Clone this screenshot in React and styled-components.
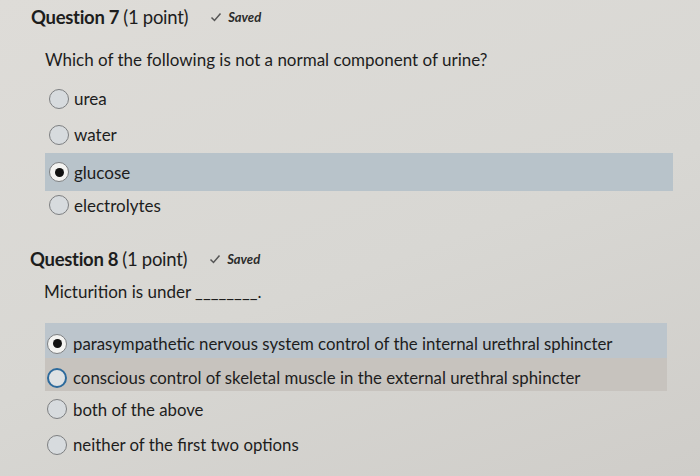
import React from 'react';
import styled, { createGlobalStyle } from 'styled-components';

const Global = createGlobalStyle`
  html, body { margin: 0; padding: 0; }
  body {
    width: 700px;
    height: 476px;
    overflow: hidden;
    background: linear-gradient(160deg, #dedcd8 0%, #d8d7d3 55%, #cfcdc9 100%);
    font-family: Lato, "Open Sans", sans-serif;
    color: #1d1d1d;
  }
`;

const Page = styled.div`
  padding-top: 5px;
`;

const Block = styled.section`
  padding-left: ${p => p.$indent}px;
  margin-bottom: ${p => p.$gap}px;
`;

const Head = styled.div`
  display: flex;
  align-items: center;
  height: 24px;
`;

const Title = styled.h2`
  margin: 0;
  font-size: 18.5px;
  font-weight: 700;
  letter-spacing: -0.3px;
  span { font-weight: 400; }
`;

const Saved = styled.div`
  display: flex;
  align-items: center;
  gap: 6px;
  margin-left: ${p => p.$left}px;
  font-size: 13px;
  font-style: italic;
  font-weight: 700;
  color: #2a2a2a;
  svg { width: 12px; height: 12px; }
`;

const Prompt = styled.p`
  margin: ${p => p.$top}px 0 0 ${p => p.$indent}px;
  font-size: 17px;
  line-height: 22px;
`;

const Options = styled.div`
  margin: ${p => p.$top}px ${p => p.$right}px 0 ${p => p.$left}px;
  display: flex;
  flex-direction: column;
`;

const Row = styled.label`
  box-sizing: border-box;
  display: flex;
  align-items: center;
  gap: ${p => p.$gap}px;
  height: ${p => p.$h}px;
  padding: ${p => p.$pt || 0}px 0 0 ${p => p.$pad}px;
  background: ${p => p.$bg || 'transparent'};
  font-size: ${p => p.$size || 17}px;
`;

const Radio = styled.span`
  box-sizing: border-box;
  width: 20px;
  height: 20px;
  border-radius: 50%;
  flex-shrink: 0;
  border: ${p => (p.$focus ? '2px solid #2d6a9c' : '1.5px solid #7d7f81')};
  background: ${p => (p.$checked ? '#f3f3f1' : p.$focus ? '#dfe2e4' : '#d7dbde')};
  display: flex;
  align-items: center;
  justify-content: center;
  &::after {
    content: '';
    display: ${p => (p.$checked ? 'block' : 'none')};
    width: 9px;
    height: 9px;
    border-radius: 50%;
    background: #111;
  }
`;

const Check = () => (
  <svg viewBox="0 0 12 12" fill="none" stroke="#555" strokeWidth="1.5">
    <path d="M1.5 6.5 L4.5 9.5 L10.5 2.5" />
  </svg>
);

export default function App() {
  return (
    <Page>
      <Global />
      <Block $indent={31} $gap={28}>
        <Head>
          <Title>Question 7 <span>(1 point)</span></Title>
          <Saved $left={22}><Check />Saved</Saved>
        </Head>
        <Prompt $top={20} $indent={14}>Which of the following is not a normal component of urine?</Prompt>
        <Options $top={10} $left={14} $right={27}>
          <Row $h={35} $pad={4} $gap={5}><Radio />urea</Row>
          <Row $h={37} $pad={4} $gap={5}><Radio />water</Row>
          <Row $h={38} $pad={4} $gap={5} $bg="#b8c3ca"><Radio $checked />glucose</Row>
          <Row $h={28} $pad={4} $gap={5}><Radio />electrolytes</Row>
        </Options>
      </Block>
      <Block $indent={30} $gap={0}>
        <Head>
          <Title>Question 8 <span>(1 point)</span></Title>
          <Saved $left={22}><Check />Saved</Saved>
        </Head>
        <Prompt $top={10} $indent={14}>Micturition is under ________.</Prompt>
        <Options $top={20} $left={15} $right={33}>
          <Row $h={35} $pt={6} $pad={2} $gap={6} $size={16.8} $bg="#bcc5cc"><Radio $checked />parasympathetic nervous system control of the internal urethral sphincter</Row>
          <Row $h={33} $pt={6} $pad={2} $gap={6} $size={16.8} $bg="#c7c3be"><Radio $focus />conscious control of skeletal muscle in the external urethral sphincter</Row>
          <Row $h={36} $pad={2} $gap={6} $size={16.8}><Radio />both of the above</Row>
          <Row $h={35} $pad={2} $gap={6} $size={16.8}><Radio />neither of the first two options</Row>
        </Options>
      </Block>
    </Page>
  );
}
